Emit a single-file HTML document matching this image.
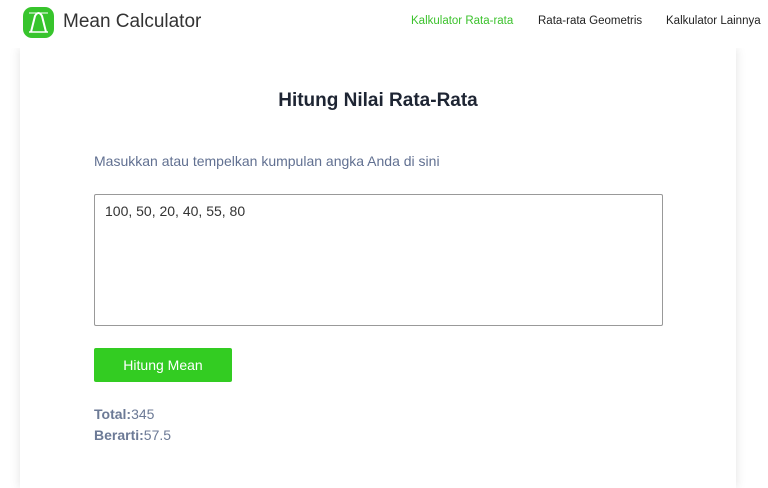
<!DOCTYPE html>
<html><head><style>
*{margin:0;padding:0;box-sizing:border-box}
body{width:768px;height:476px;overflow:hidden;background:#fff;font-family:"Liberation Sans",sans-serif;position:relative}
.hdr{position:absolute;top:0;left:0;width:768px;height:48px;background:#fff;z-index:2}
.logo{position:absolute;left:23px;top:7px;width:31px;height:31px;border-radius:9px;background:#37c42c}
.brand{position:absolute;left:63px;top:11px;font-size:19px;color:#333}
.nav{position:absolute;top:15px;font-size:11.5px;color:#222}
.card{position:absolute;left:20px;top:48px;width:716px;height:440px;background:#fff;box-shadow:0 0 10px rgba(0,0,0,.12)}
h1{position:absolute;left:0;width:716px;top:42px;text-align:center;font-size:19px;font-weight:bold;color:#1e2533}
.lab{position:absolute;left:74px;top:105px;font-size:14px;color:#617091}
.ta{position:absolute;left:74px;top:146px;width:569px;height:132px;border:1px solid #999;border-radius:2px;padding:8px 10px;font-size:14px;color:#333}
.btn{position:absolute;left:74px;top:300px;width:138px;height:34px;background:#33cc22;border-radius:2px;color:#fff;font-size:14px;text-align:center;line-height:34px}
.res{position:absolute;left:74px;top:356px;font-size:14px;color:#6c7a96;line-height:21px}
</style></head><body>
<div class="hdr">
<div class="logo"><svg width="31" height="31" viewBox="0 0 31 31"><path d="M6 6H25" stroke="#fff" stroke-width="1"/><path d="M8 25L12 9Q15.5 3 19 9L23 25" fill="none" stroke="#fff" stroke-width="2"/><path d="M6 25H25" stroke="#fff" stroke-width="1.5"/></svg></div>
<div class="brand">Mean Calculator</div>
<div class="nav" style="left:411px;color:#3cc22d">Kalkulator Rata-rata</div>
<div class="nav" style="left:538px">Rata-rata Geometris</div>
<div class="nav" style="left:666px">Kalkulator Lainnya</div>
</div>
<div class="card">
<h1>Hitung Nilai Rata-Rata</h1>
<div class="lab">Masukkan atau tempelkan kumpulan angka Anda di sini</div>
<div class="ta">100, 50, 20, 40, 55, 80</div>
<div class="btn">Hitung Mean</div>
<div class="res"><b>Total:</b>345<br><b>Berarti:</b>57.5</div>
</div>
</body></html>
